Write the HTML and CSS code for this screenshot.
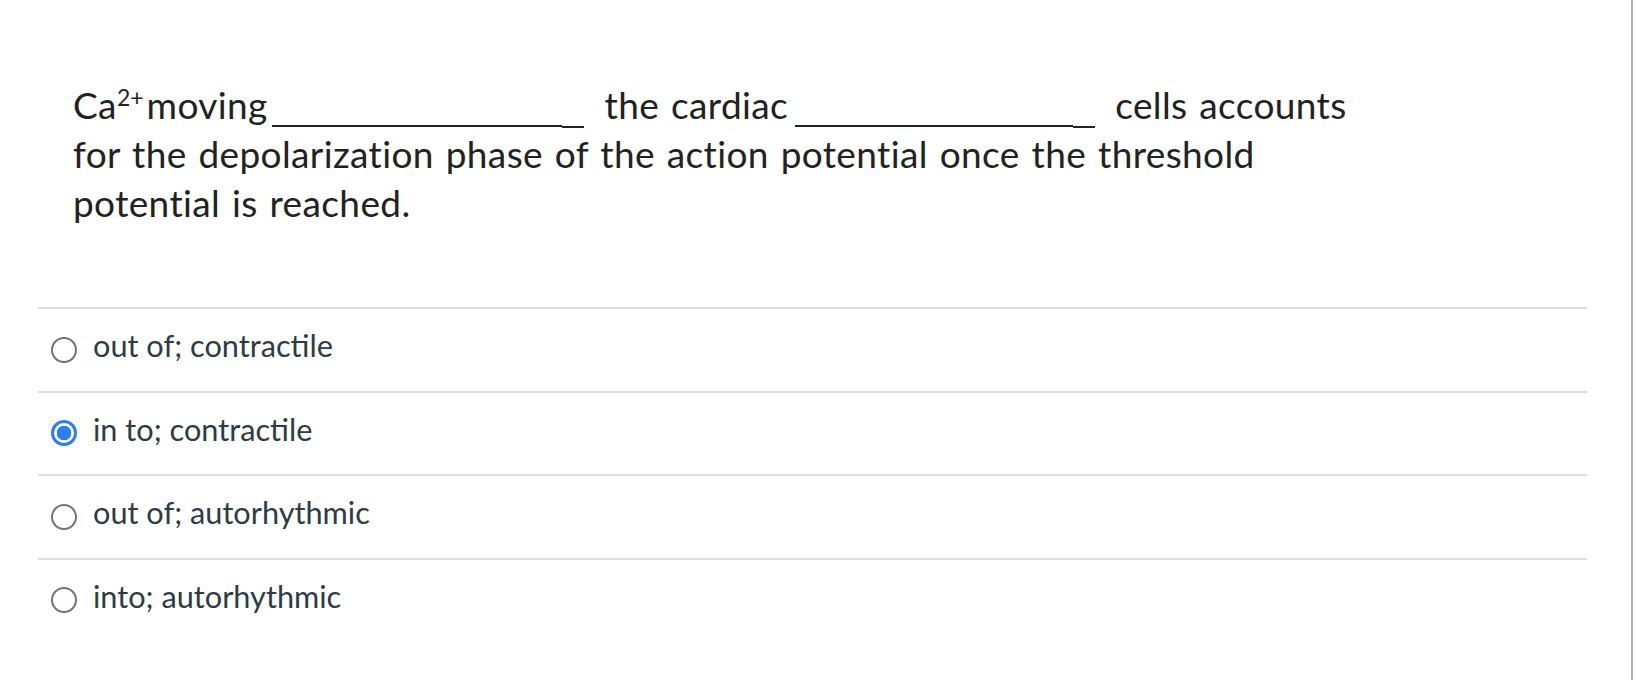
FILE: index.html
```html
<!DOCTYPE html>
<html lang="en">
<head>
<meta charset="utf-8">
<title>Question</title>
<link rel="stylesheet" href="styles.css">
</head>
<body>
<div class="page">
  <div class="question">
    <p class="stem">Ca<sup class="sup">2+</sup>moving<span class="blank b1"><span class="seg long"></span><span class="seg tail"></span></span>the cardiac<span class="blank b2"><span class="seg long"></span><span class="seg tail"></span></span>cells accounts<br>for the depolarization phase of the action potential once the threshold<br>potential is reached.</p>
  </div>
  <div class="answers">
    <label class="answer"><input class="radio" type="radio" name="q1"><span class="label">out of; contractile</span></label>
    <label class="answer"><input class="radio" type="radio" name="q1" checked><span class="label">in to; contractile</span></label>
    <label class="answer"><input class="radio" type="radio" name="q1"><span class="label">out of; autorhythmic</span></label>
    <label class="answer"><input class="radio" type="radio" name="q1"><span class="label">into; autorhythmic</span></label>
  </div>
</div>
</body>
</html>
```
FILE: styles.css
```css
html, body {
  margin: 0;
  padding: 0;
  background: #ffffff;
}

.page {
  width: 1633px;
  height: 680px;
  box-sizing: border-box;
  border-right: 2px solid #b4b4b4;
  padding-left: 38px;
  padding-right: 44px;
  background: #ffffff;
}

.question {
  padding: 80px 0 0 35px;
  height: 307px;
  box-sizing: border-box;
}

.stem {
  margin: 0;
  font-family: "Lato", "Open Sans", sans-serif;
  font-size: 37px;
  line-height: 49px;
  color: #222222;
  letter-spacing: 0.38px;
  word-spacing: 2px;
}

.sup {
  font-size: 23px;
  line-height: 0;
  vertical-align: 13px;
  margin-right: 3px;
  letter-spacing: 0;
}

.blank {
  display: inline-flex;
  align-items: flex-end;
  height: 20px;
  vertical-align: -8px;
}

.b1 { width: 312px; margin: 0 21px 0 4px; }
.b2 { width: 300px; margin: 0 20px 0 7px; }

.seg {
  display: block;
  border-bottom: 2px solid #222222;
}

.seg.long { flex: 1; margin-bottom: 1px; }
.seg.tail { width: 22px; }

.answers {
  display: flex;
  flex-direction: column;
}

.answer {
  display: flex;
  align-items: center;
  gap: 16px;
  height: 83.5px;
  box-sizing: border-box;
  border-top: 2px solid #dddddd;
  padding-left: 13px;
  font-family: "Lato", sans-serif;
  font-size: 30.7px;
  color: #2d3b45;
  cursor: pointer;
}

.radio {
  appearance: none;
  -webkit-appearance: none;
  margin: 0;
  width: 26px;
  height: 26px;
  border-radius: 50%;
  border: 2px solid #737373;
  box-sizing: border-box;
  background: #ffffff;
  flex: none;
}

.radio:checked {
  border: 3px solid #2e7cf6;
  background: radial-gradient(circle, #2e7cf6 0 7px, #ffffff 7.5px);
}

.label {
  line-height: 1;
  margin: 0 0 6px 0;
}
```
